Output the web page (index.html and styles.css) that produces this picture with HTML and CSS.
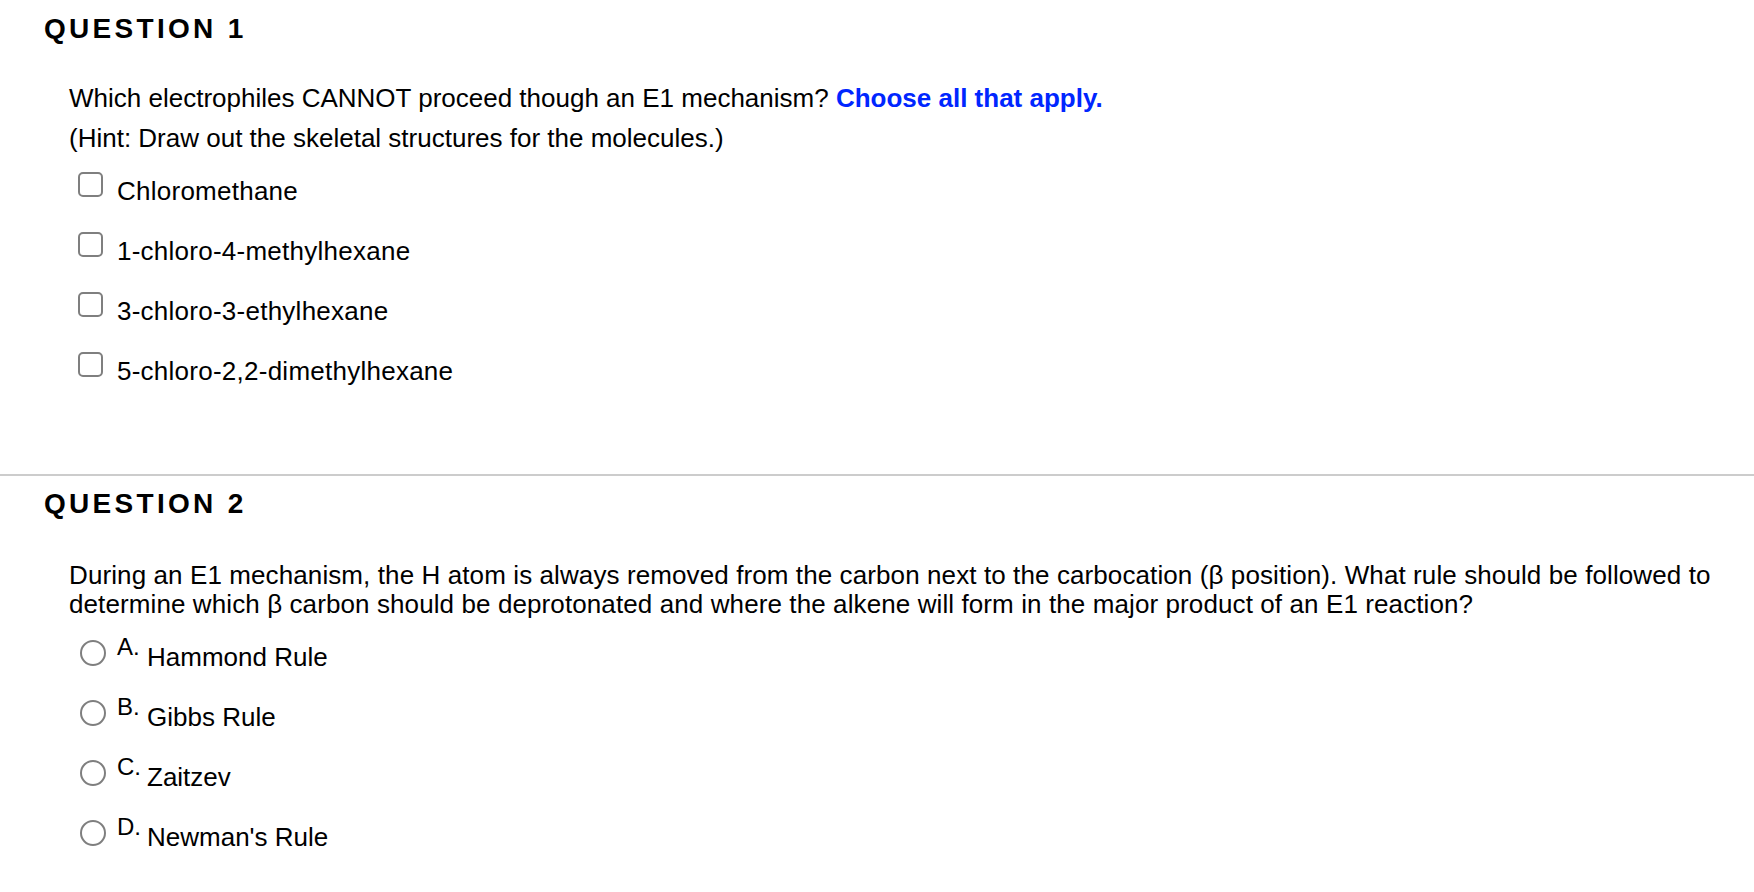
FILE: index.html
```html
<!DOCTYPE html>
<html lang="en">
<head>
<meta charset="utf-8">
<title>Questions</title>
<link rel="stylesheet" href="styles.css">
</head>
<body>
  <section class="question q1">
    <h2 class="q-title">QUESTION 1</h2>
    <div class="q-body">
      <p class="q-text">Which electrophiles CANNOT proceed though an E1 mechanism? <strong class="instr">Choose all that apply.</strong></p>
      <p class="q-text q-hint">(Hint: Draw out the skeletal structures for the molecules.)</p>
      <ul class="answers checks">
        <li class="answer"><input class="box" type="checkbox"><span class="label">Chloromethane</span></li>
        <li class="answer"><input class="box" type="checkbox"><span class="label">1-chloro-4-methylhexane</span></li>
        <li class="answer"><input class="box" type="checkbox"><span class="label">3-chloro-3-ethylhexane</span></li>
        <li class="answer"><input class="box" type="checkbox"><span class="label">5-chloro-2,2-dimethylhexane</span></li>
      </ul>
    </div>
  </section>
  <hr class="divider">
  <section class="question q2">
    <h2 class="q-title">QUESTION 2</h2>
    <div class="q-body">
      <p class="q-para">During an E1 mechanism, the H atom is always removed from the carbon next to the carbocation (β position). What rule should be followed to determine which β carbon should be deprotonated and where the alkene will form in the major product of an E1 reaction?</p>
      <ul class="answers radios">
        <li class="answer"><input class="radio" type="radio" name="q2"><span class="letter">A.</span><span class="label">Hammond Rule</span></li>
        <li class="answer"><input class="radio" type="radio" name="q2"><span class="letter">B.</span><span class="label">Gibbs Rule</span></li>
        <li class="answer"><input class="radio" type="radio" name="q2"><span class="letter">C.</span><span class="label">Zaitzev</span></li>
        <li class="answer"><input class="radio" type="radio" name="q2"><span class="letter">D.</span><span class="label">Newman's Rule</span></li>
      </ul>
    </div>
  </section>
</body>
</html>
```
FILE: styles.css
```css
html, body {
  margin: 0;
  padding: 0;
  background: #ffffff;
}

body {
  font-family: "Liberation Sans", Arial, Helvetica, sans-serif;
  color: #000000;
  font-size: 26px;
}

.question {
  padding-right: 30px;
}

.q1 {
  padding-top: 13px;
  padding-bottom: 85px;
}

.q2 {
  padding-top: 12px;
}

.q-title {
  margin: 0;
  padding-left: 44px;
  font-size: 28px;
  line-height: 32px;
  font-weight: 700;
  letter-spacing: 3.3px;
}

.q-body {
  padding-left: 69px;
}

.q1 .q-body {
  margin-top: 35px;
}

.q2 .q-body {
  margin-top: 41px;
}

.q-text {
  margin: 0;
  line-height: 36px;
}

.q-hint {
  margin-top: 4px;
}

.q-para {
  margin: 0;
  line-height: 29px;
  letter-spacing: 0.1px;
}

.instr {
  color: #0026ff;
  font-weight: 700;
}

.answers {
  list-style: none;
  margin: 17px 0 0 0;
  padding: 0;
  display: flex;
  flex-direction: column;
  gap: 24px;
}

.checks .label {
  letter-spacing: 0.25px;
}

.radios {
  margin-top: 20px;
}

.answer {
  display: flex;
  align-items: flex-start;
  line-height: 36px;
  height: 36px;
}

.box {
  appearance: none;
  -webkit-appearance: none;
  box-sizing: border-box;
  width: 25px;
  height: 25px;
  margin: -1px 14px 0 9px;
  border: 2px solid #7f7f7f;
  border-radius: 5px;
  background: #ffffff;
  flex: none;
}

.radio {
  appearance: none;
  -webkit-appearance: none;
  box-sizing: border-box;
  width: 26px;
  height: 26px;
  margin: 1px 11px 0 11px;
  border: 2px solid #7f7f7f;
  border-radius: 50%;
  background: #ffffff;
  flex: none;
}

.letter {
  width: 30px;
  flex: none;
  font-size: 24px;
  line-height: 24px;
  margin-top: -4px;
}

.label {
  white-space: nowrap;
}

.divider {
  margin: 0;
  border: 0;
  border-top: 2px solid #cccccc;
  height: 0;
}
```
